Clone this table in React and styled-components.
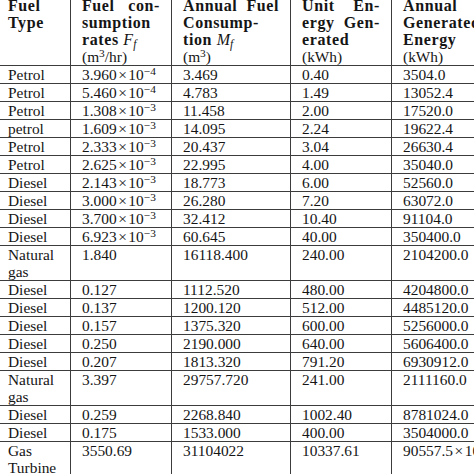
import React from "react";
import styled, { createGlobalStyle } from "styled-components";

const GlobalStyle = createGlobalStyle`
  html, body {
    margin: 0;
    padding: 0;
    background: #ffffff;
  }
`;

const rows = [
  ["Petrol", ["3.960", "4"], "3.469", "0.40", "3504.0"],
  ["Petrol", ["5.460", "4"], "4.783", "1.49", "13052.4"],
  ["Petrol", ["1.308", "3"], "11.458", "2.00", "17520.0"],
  ["petrol", ["1.609", "3"], "14.095", "2.24", "19622.4"],
  ["Petrol", ["2.333", "3"], "20.437", "3.04", "26630.4"],
  ["Petrol", ["2.625", "3"], "22.995", "4.00", "35040.0"],
  ["Diesel", ["2.143", "3"], "18.773", "6.00", "52560.0"],
  ["Diesel", ["3.000", "3"], "26.280", "7.20", "63072.0"],
  ["Diesel", ["3.700", "3"], "32.412", "10.40", "91104.0"],
  ["Diesel", ["6.923", "3"], "60.645", "40.00", "350400.0"],
  ["Natural gas", "1.840", "16118.400", "240.00", "2104200.0"],
  ["Diesel", "0.127", "1112.520", "480.00", "4204800.0"],
  ["Diesel", "0.137", "1200.120", "512.00", "4485120.0"],
  ["Diesel", "0.157", "1375.320", "600.00", "5256000.0"],
  ["Diesel", "0.250", "2190.000", "640.00", "5606400.0"],
  ["Diesel", "0.207", "1813.320", "791.20", "6930912.0"],
  ["Natural gas", "3.397", "29757.720", "241.00", "2111160.0"],
  ["Diesel", "0.259", "2268.840", "1002.40", "8781024.0"],
  ["Diesel", "0.175", "1533.000", "400.00", "3504000.0"],
  ["Gas Turbine", "3550.69", "31104022", "10337.61", ["90557.5", "1", true]],
];

function Sci({ value }) {
  const [mantissa, exp, positive] = value;
  return (
    <>
      {mantissa}
      <Times>×</Times>10
      <Sup>{positive ? exp : "−" + exp}</Sup>
    </>
  );
}

export default function App() {
  return (
    <>
      <GlobalStyle />
      <Frame>
        <Table>
          <colgroup>
            <Col w={74} />
            <Col w={101} />
            <Col w={119} />
            <Col w={101} />
            <Col w={110} />
          </colgroup>
          <thead>
            <tr>
              <Head>
                <Line>Fuel</Line>
                <Line>Type</Line>
              </Head>
              <Head>
                <Line spread>
                  <span>Fuel</span>
                  <span>con-</span>
                </Line>
                <Line>sumption</Line>
                <Line>
                  rates&nbsp;<Math>F<Sub>f</Sub></Math>
                </Line>
                <Unit>
                  (m<Sup>3</Sup>/hr)
                </Unit>
              </Head>
              <Head>
                <Line spread>
                  <span>Annual</span>
                  <span>Fuel</span>
                </Line>
                <Line>Consump-</Line>
                <Line>
                  tion&nbsp;<Math>M<Sub>f</Sub></Math>
                </Line>
                <Unit>
                  (m<Sup>3</Sup>)
                </Unit>
              </Head>
              <Head>
                <Line spread>
                  <span>Unit</span>
                  <span>En-</span>
                </Line>
                <Line spread>
                  <span>ergy</span>
                  <span>Gen-</span>
                </Line>
                <Line>erated</Line>
                <Unit>(kWh)</Unit>
              </Head>
              <Head>
                <Line>Annual</Line>
                <Line>Generated</Line>
                <Line>Energy</Line>
                <Unit>(kWh)</Unit>
              </Head>
            </tr>
          </thead>
          <tbody>
            {rows.map((row, i) => (
              <tr key={i}>
                {row.map((cell, j) => (
                  <Cell key={j}>
                    {Array.isArray(cell) ? <Sci value={cell} /> : cell}
                  </Cell>
                ))}
              </tr>
            ))}
          </tbody>
        </Table>
      </Frame>
    </>
  );
}

const Frame = styled.div`
  width: 474px;
  height: 474px;
  overflow: hidden;
  background: #ffffff;
`;

const Table = styled.table`
  margin: -4px 0 0 -4px;
  border-collapse: collapse;
  table-layout: fixed;
  width: 505px;
  font-family: "Liberation Serif", "Times New Roman", serif;
  font-size: 15.4px;
  color: #151515;
`;

const Col = styled.col`
  width: ${(p) => p.w}px;
`;

const Head = styled.th`
  border: 1.2px solid #3c3c3c;
  padding: 0 11px 0 11px;
  vertical-align: top;
  text-align: left;
  font-weight: bold;
  font-size: 16px;
  line-height: 17px;
  height: 68px;
`;

const Line = styled.span`
  display: flex;
  justify-content: ${(p) => (p.spread ? "space-between" : "flex-start")};
  white-space: nowrap;
  letter-spacing: 0.6px;
`;

const Unit = styled.span`
  display: block;
  font-weight: normal;
  font-size: 15.4px;
  white-space: nowrap;
`;

const Math = styled.span`
  font-style: italic;
  font-weight: normal;
  font-size: 16px;
  letter-spacing: 0;
`;

const Times = styled.span`
  margin: 0 1.5px;
`;

const Sub = styled.sub`
  font-size: 0.72em;
  line-height: 0;
  vertical-align: -0.25em;
`;

const Sup = styled.sup`
  font-size: 0.74em;
  line-height: 0;
  vertical-align: 0.45em;
`;

const Cell = styled.td`
  border: 1.2px solid #3c3c3c;
  padding: 0 11px;
  vertical-align: top;
  line-height: 17px;
  white-space: normal;
  word-break: keep-all;
`;
